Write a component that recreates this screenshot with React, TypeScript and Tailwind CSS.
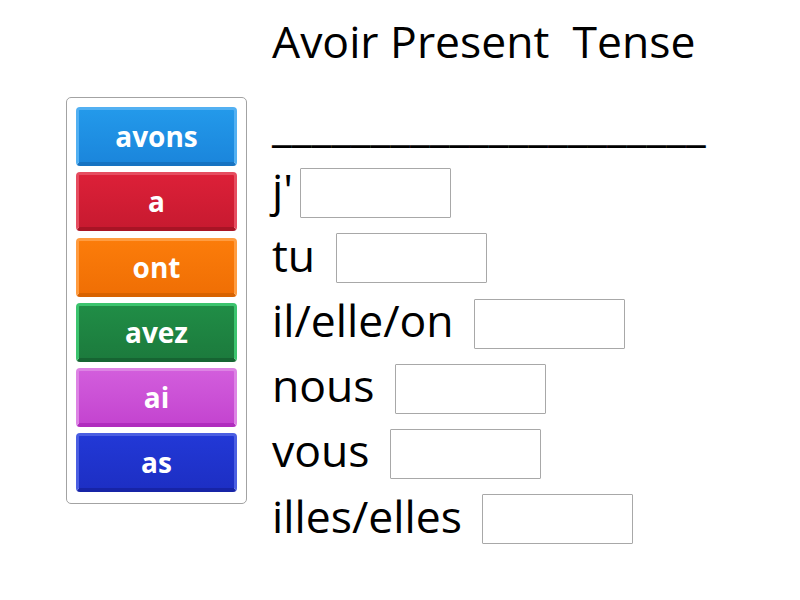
import React from "react";

const tiles = [
  { word: "avons", cls: "bg-linear-to-b from-[#2399ea] to-[#1b86dc] border-[#52b0f2] border-b-[#1673c2]" },
  { word: "a", cls: "bg-linear-to-b from-[#dc2038] to-[#c81a30] border-[#e64d60] border-b-[#a81425]" },
  { word: "ont", cls: "bg-linear-to-b from-[#fb7c0a] to-[#f06f05] border-[#ff9c40] border-b-[#d86200]" },
  { word: "avez", cls: "bg-linear-to-b from-[#208d46] to-[#1c7b3d] border-[#3cc46e] border-b-[#166432]" },
  { word: "ai", cls: "bg-linear-to-b from-[#d25ddc] to-[#c444d0] border-[#dd84e4] border-b-[#b02cbe]" },
  { word: "as", cls: "bg-linear-to-b from-[#2238d6] to-[#1d2fc4] border-[#4b5fe2] border-b-[#1724a6]" },
];

const rows = [
  { label: "j'", space: false },
  { label: "tu", space: true },
  { label: "il/elle/on", space: true },
  { label: "nous", space: true },
  { label: "vous", space: true },
  { label: "illes/elles", space: true },
];

export default function App() {
  return (
    <div className="w-[800px] h-[600px] bg-white flex font-['Open_Sans',sans-serif] text-black overflow-hidden">
      {/* word bank */}
      <div className="ml-[66px] mt-[97px] w-[181px] h-[407px] border border-[#a3a3a3] rounded-[5px] p-[9px] flex flex-col gap-[6.3px] shrink-0">
        {tiles.map((t) => (
          <div
            key={t.word}
            className={
              "h-[59px] rounded-[4px] border-t-[3px] border-x-[3px] border-b-[4px] flex items-center justify-center text-white text-[28px] font-bold " +
              t.cls
            }
          >
            {t.word}
          </div>
        ))}
      </div>

      {/* worksheet */}
      <div className="ml-[25px] flex flex-col text-[44.5px]">
        <div className="mt-[11px] leading-[60px] whitespace-nowrap">Avoir Present{"\u00a0"} Tense</div>
        <div className="mt-[20px] h-[65.3px] leading-[65.3px] text-[45px] whitespace-nowrap">______________________</div>
        {rows.map((r) => (
          <div key={r.label} className="h-[65.3px] flex items-start leading-[65.3px] whitespace-nowrap">
            <span>{r.space ? r.label + "\u00a0" : r.label}</span>
            <input
              type="text"
              className={
                "mt-[11.7px] w-[151px] h-[50px] border border-[#a8a8a8] rounded-[1px] bg-white outline-none " +
                (r.space ? "ml-[9px]" : "ml-[7px]")
              }
            />
          </div>
        ))}
      </div>
    </div>
  );
}
